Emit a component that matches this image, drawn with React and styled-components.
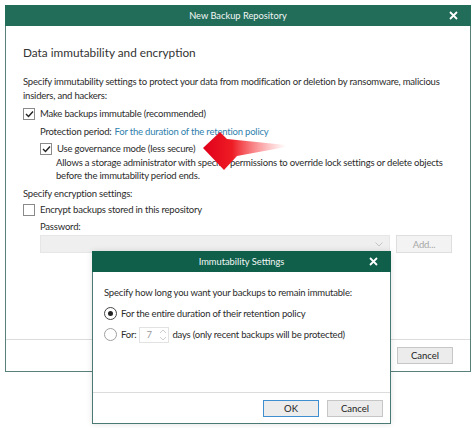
import styled, { createGlobalStyle } from "styled-components";

const GlobalStyle = createGlobalStyle`
    html, body {
        margin: 0;
        padding: 0;
        background: #fff;
    }
    body {
        font-family: Lato, "Noto Sans", sans-serif;
        color: #2b2b2b;
    }
`;

const Page = styled.div`
    position: relative;
    width: 474px;
    height: 428px;
    overflow: hidden;
    padding: 5px 0 0 5px;
    box-sizing: border-box;
`;

const Window = styled.div`
    display: flex;
    flex-direction: column;
    width: ${(p) => p.$w}px;
    height: ${(p) => p.$h}px;
    box-sizing: border-box;
    border: 1px solid #5a807c;
    border-top: none;
    background: #fff;
`;

const TitleBar = styled.div`
    position: relative;
    display: flex;
    align-items: center;
    justify-content: center;
    height: 21px;
    margin: 0 -1px;
    background: ${(p) => p.$bg || "#226c5a"};
    color: #f2f7f5;
    font-size: 9.3px;
    flex-shrink: 0;
`;

const CloseMark = styled.svg`
    position: absolute;
    right: ${(p) => p.$right}px;
    top: 6px;
`;

const Body = styled.div`
    flex: 1;
    display: flex;
    flex-direction: column;
    padding: ${(p) => p.$pad};
    font-size: 9.5px;
    letter-spacing: -0.2px;
    white-space: nowrap;
`;

const Footer = styled.div`
    display: flex;
    justify-content: flex-end;
    gap: 8px;
    height: ${(p) => p.$h}px;
    box-sizing: border-box;
    padding: 7px ${(p) => p.$pr}px 0 0;
    border-top: 1px solid #dcdcdc;
`;

const Button = styled.div`
    display: flex;
    align-items: center;
    justify-content: center;
    width: 56px;
    height: ${(p) => (p.$tall ? 18 : 17)}px;
    box-sizing: border-box;
    border: 1px solid ${(p) => (p.$primary ? "#3f8fd0" : p.$disabled ? "#dedede" : "#c6c6c6")};
    background: ${(p) => (p.$disabled ? "#f3f3f3" : "#ececec")};
    color: ${(p) => (p.$disabled ? "#a8a8a8" : "#222")};
    font-size: 9.5px;
`;

const Heading = styled.div`
    font-size: 11.8px;
    letter-spacing: 0;
    color: #333;
    margin-top: 19px;
    line-height: 16px;
`;

const Para = styled.div`
    line-height: ${(p) => p.$lh || 14}px;
    margin-top: ${(p) => p.$mt || 0}px;
    margin-left: ${(p) => p.$ml || 0}px;
`;

const Row = styled.div`
    display: flex;
    align-items: center;
    height: 17px;
    margin-top: ${(p) => p.$mt || 0}px;
    margin-left: ${(p) => p.$ml || 0}px;
`;

const Box = styled.span`
    display: flex;
    align-items: center;
    justify-content: center;
    width: 12px;
    height: 12px;
    box-sizing: border-box;
    border: 1px solid #8a8a8a;
    background: #fff;
    margin-right: 5px;
`;

const Radio = styled.span`
    display: flex;
    align-items: center;
    justify-content: center;
    width: 13px;
    height: 13px;
    box-sizing: border-box;
    border-radius: 50%;
    border: 1px solid ${(p) => (p.$on ? "#444" : "#a0a0a0")};
    margin-right: 4px;
    &::after {
        content: "";
        display: ${(p) => (p.$on ? "block" : "none")};
        width: 5px;
        height: 5px;
        border-radius: 50%;
        background: #222;
    }
`;

const Link = styled.span`
    color: #2f7fae;
    margin-left: 3px;
`;

const FieldRow = styled.div`
    display: flex;
    gap: 6px;
    margin: 0 0 0 17px;
`;

const Select = styled.div`
    position: relative;
    width: 350px;
    height: 18px;
    background: #efefef;
    border: 1px solid #e6e6e6;
    box-sizing: border-box;
`;

const Spin = styled.div`
    display: flex;
    align-items: center;
    justify-content: space-between;
    width: 30px;
    height: 16px;
    box-sizing: border-box;
    border: 1px solid #e2e2e2;
    padding: 0 1px 0 6px;
    color: #9a9a9a;
    margin: 0 3px 0 3px;
`;

const Modal = styled(Window)`
    position: absolute;
    left: 92px;
    top: 251px;
    border-color: #4b7a75;
    box-shadow: 0 0 6px rgba(0, 0, 0, 0.12);
`;

const Arrow = styled.svg`
    position: absolute;
    left: 200px;
    top: 128px;
`;

const Check = () => (
    <svg width="9" height="8" viewBox="0 0 9 8">
        <path d="M1 4 L3.5 6.5 L8 1.5" fill="none" stroke="#222" strokeWidth="1.4" />
    </svg>
);

const Cross = ({ right }) => (
    <CloseMark $right={right} width="9" height="9" viewBox="0 0 9 9">
        <path d="M1 1 L8 8 M8 1 L1 8" stroke="#fff" strokeWidth="1.8" />
    </CloseMark>
);

export default function App() {
    return (
        <Page>
            <GlobalStyle />
            <Window $w={466} $h={367}>
                <TitleBar>
                    New Backup Repository
                    <Cross right={13} />
                </TitleBar>
                <Body $pad="0 18px 0 17px">
                    <Heading>Data immutability and encryption</Heading>
                    <Para $mt={14}>
                        Specify immutability settings to protect your data from modification or deletion by ransomware, malicious
                        <br />
                        insiders, and hackers:
                    </Para>
                    <Row $mt={2}>
                        <Box><Check /></Box>
                        Make backups immutable (recommended)
                    </Row>
                    <Row $mt={1} $ml={17}>
                        Protection period:<Link>For the duration of the retention policy</Link>
                    </Row>
                    <Row $mt={0} $ml={17}>
                        <Box><Check /></Box>
                        Use governance mode (less secure)
                    </Row>
                    <Para $ml={33} $lh={13} $mt={-1}>
                        Allows a storage administrator with specific permissions to override lock settings or delete objects
                        <br />
                        before the immutability period ends.
                    </Para>
                    <Row $mt={3}>Specify encryption settings:</Row>
                    <Row $mt={-1}>
                        <Box />
                        Encrypt backups stored in this repository
                    </Row>
                    <Row $mt={0} $ml={17}>Password:</Row>
                    <FieldRow>
                        <Select>
                            <svg style={{ position: "absolute", right: 6, top: 6 }} width="8" height="5" viewBox="0 0 8 5">
                                <path d="M0.5 0.5 L4 4 L7.5 0.5" fill="none" stroke="#c4c4c4" strokeWidth="1" />
                            </svg>
                        </Select>
                        <Button $disabled $tall>Add...</Button>
                    </FieldRow>
                </Body>
                <Footer $h={32} $pr={17}>
                    <Button>Cancel</Button>
                </Footer>
            </Window>

            <Arrow width="100" height="46" viewBox="0 0 100 46">
                <defs>
                    <linearGradient id="arrowFill" x1="0" y1="0" x2="1" y2="0">
                        <stop offset="0" stopColor="#e0001a" />
                        <stop offset="0.35" stopColor="#ee1c24" />
                        <stop offset="1" stopColor="#ff5a5a" stopOpacity="0" />
                    </linearGradient>
                </defs>
                <path
                    d="M3 20 L20 4 L27 11 L86 17 L86 19 L37 28 L24 42 Z"
                    fill="url(#arrowFill)"
                />
            </Arrow>

            <Modal $w={299} $h={173}>
                <TitleBar $bg="#0f5f4a">
                    Immutability Settings
                    <Cross right={13} />
                </TitleBar>
                <Body $pad="0 12px 0 11px">
                    <Para $mt={14}>Specify how long you want your backups to remain immutable:</Para>
                    <Row $mt={5}>
                        <Radio $on />
                        For the entire duration of their retention policy
                    </Row>
                    <Row $mt={4}>
                        <Radio />
                        For:
                        <Spin>
                            7
                            <svg width="8" height="14" viewBox="0 0 8 14">
                                <path d="M1 5 L4 2 L7 5 M1 9 L4 12 L7 9" fill="none" stroke="#cfcfcf" strokeWidth="1" />
                            </svg>
                        </Spin>
                        days (only recent backups will be protected)
                    </Row>
                </Body>
                <Footer $h={31} $pr={7}>
                    <Button $primary>OK</Button>
                    <Button>Cancel</Button>
                </Footer>
            </Modal>
        </Page>
    );
}
